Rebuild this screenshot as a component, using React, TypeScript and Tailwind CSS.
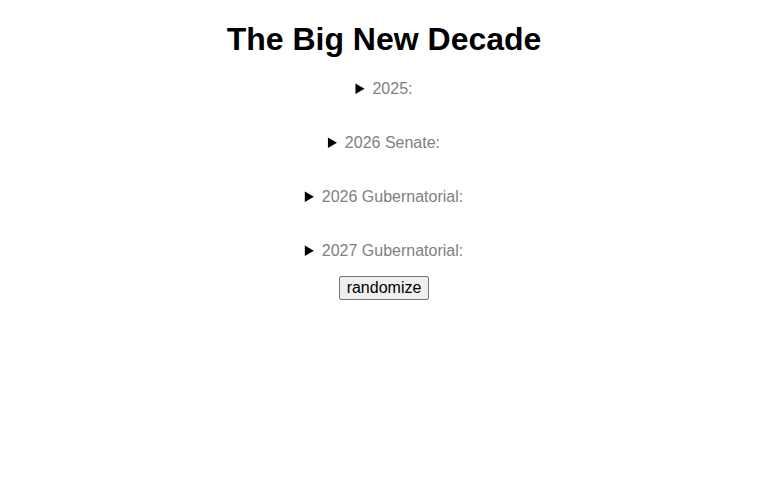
import React from "react";

const races = ["2025:", "2026 Senate:", "2026 Gubernatorial:", "2027 Gubernatorial:"];

export default function App() {
  return (
    <div
      className="min-h-[480px] bg-white text-black text-center"
      style={{ fontFamily: '"Liberation Sans", Arial, sans-serif' }}
    >
      <h1 className="text-[32px] font-bold leading-[37px] pt-[21px] mb-[22px]">The Big New Decade</h1>
      <div className="flex flex-col gap-[36px]">
        {races.map((r) => (
          <details key={r} className="text-[16px] leading-[18px]">
            <summary className="cursor-pointer">
              <span className="text-[#808080]">{r}</span>
            </summary>
          </details>
        ))}
      </div>
      <div className="mt-[16px]">
        <button className="text-[16px] leading-[18px] px-[7px] py-[2px] border border-[#767676] rounded-[2px] bg-[#efefef] text-black">
          randomize
        </button>
      </div>
    </div>
  );
}
